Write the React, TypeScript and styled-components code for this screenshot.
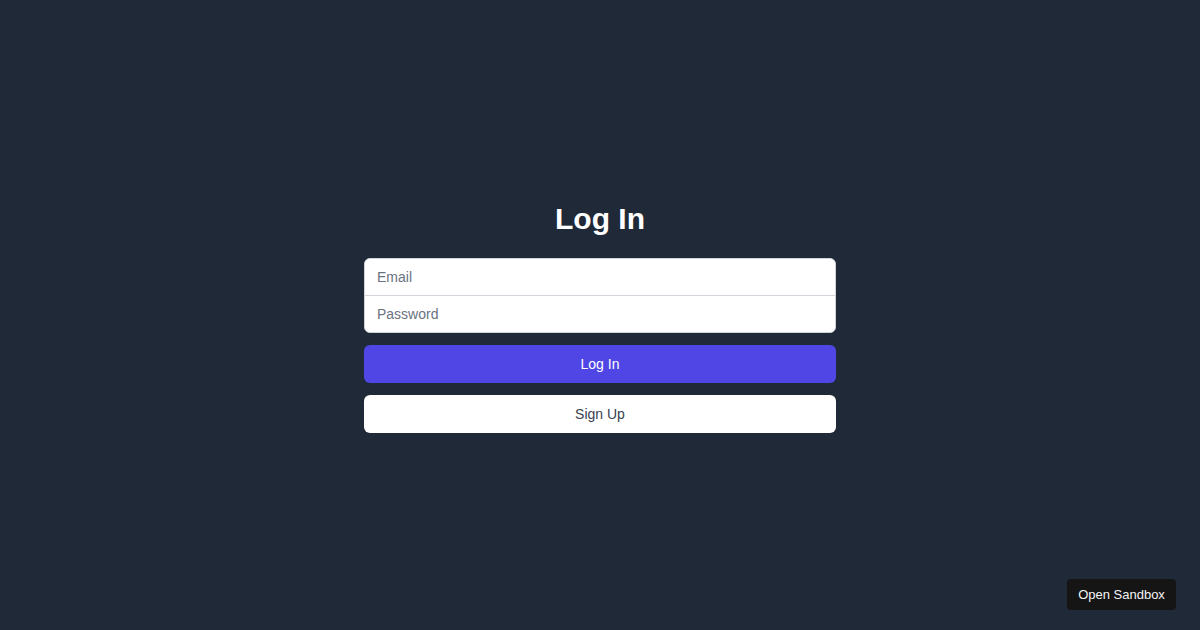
import styled, { createGlobalStyle } from 'styled-components';

const GlobalStyle = createGlobalStyle`
  html, body {
    margin: 0;
    padding: 0;
    background: #1f2937;
    font-family: "Liberation Sans", Arial, sans-serif;
  }
  * {
    box-sizing: border-box;
  }
`

const Page = styled.main`
  width: 100%;
  min-height: 630px;
  background: #1f2937;
  display: flex;
  justify-content: center;
  padding-top: 201px;
`
const Form = styled.form`
  width: 472px;
  display: flex;
  flex-direction: column;
`
const Title = styled.h1`
  margin: 0 0 21px;
  font-size: 30px;
  line-height: 36px;
  font-weight: 700;
  color: #fff;
  text-align: center;
`
const Fields = styled.div`
  display: flex;
  flex-direction: column;
  border: 1px solid #d1d5db;
  border-radius: 6px;
  background: #fff;
  overflow: hidden;
`
const Input = styled.input`
  height: 36px;
  border: none;
  outline: none;
  padding: 0 12px;
  font-family: inherit;
  font-size: 14px;
  color: #111827;
  background: #fff;
  & + & {
    border-top: 1px solid #d1d5db;
    height: 37px;
  }
  &::placeholder {
    color: #6b7280;
  }
`
const Button = styled.button<{ $primary?: boolean }>`
  height: 38px;
  margin-top: 12px;
  border: none;
  border-radius: 6px;
  font-family: inherit;
  font-size: 14px;
  cursor: pointer;
  background: ${p => (p.$primary ? '#4f46e5' : '#fff')};
  color: ${p => (p.$primary ? '#fff' : '#374151')};
`
const SandboxLink = styled.a`
  position: fixed;
  right: 24px;
  bottom: 20px;
  width: 109px;
  height: 31px;
  display: flex;
  align-items: center;
  justify-content: center;
  background: #151515;
  color: #f3f4f6;
  border-radius: 4px;
  font-size: 13px;
  text-decoration: none;
`

export default function App() {
  return (
    <>
      <GlobalStyle />
      <Page>
        <Form onSubmit={e => e.preventDefault()}>
          <Title>Log In</Title>
          <Fields>
            <Input type="email" placeholder="Email" />
            <Input type="password" placeholder="Password" />
          </Fields>
          <Button type="submit" $primary>Log In</Button>
          <Button type="button">Sign Up</Button>
        </Form>
      </Page>
      <SandboxLink href="#">Open Sandbox</SandboxLink>
    </>
  )
}
